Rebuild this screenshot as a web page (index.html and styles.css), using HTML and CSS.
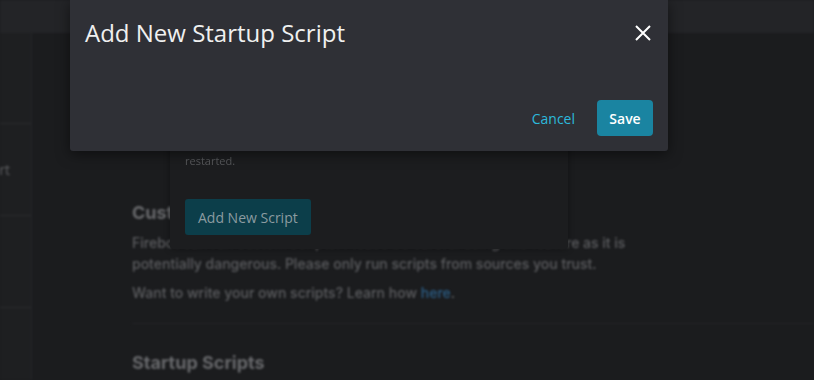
FILE: index.html
```html
<!DOCTYPE html>
<html>
<head>
<meta charset="utf-8">
<link rel="stylesheet" href="styles.css">
</head>
<body>
<div class="app">
  <header class="topbar"></header>
  <div class="workspace">
    <nav class="sidebar">
      <div class="nav-item"><span>Dashboard</span></div>
      <div class="nav-item"><span>Restart</span></div>
      <div class="nav-item"><span>Commands</span></div>
      <div class="nav-item"><span>Events</span></div>
    </nav>
    <main class="content">
      <h2 class="section-title">Custom Scripts</h2>
      <p class="text">Firebot can run custom scripts. Please be careful using this feature as it is<br>potentially dangerous. Please only run scripts from sources you trust.</p>
      <p class="text">Want to write your own scripts? Learn how <a class="link" href="#">here</a>.</p>
      <hr class="divider">
      <h2 class="section-title">Startup Scripts</h2>
    </main>
  </div>
</div>

<div class="popover">
  <p class="popover-text">Startup scripts run every time Firebot opens up, or when scripts are<br>restarted.</p>
  <button class="btn-dim">Add New Script</button>
</div>

<div class="modal">
  <div class="modal-header">
    <h1 class="modal-title">Add New Startup Script</h1>
    <button class="close" aria-label="Close">
      <svg width="16" height="16" viewBox="0 0 16 16"><path d="M1 1 L15 15 M15 1 L1 15" stroke="#ffffff" stroke-width="2" fill="none"/></svg>
    </button>
  </div>
  <div class="modal-footer">
    <button class="btn-link">Cancel</button>
    <button class="btn-primary">Save</button>
  </div>
</div>
</body>
</html>
```

FILE: styles.css
```css
html, body {
  margin: 0;
  padding: 0;
  height: 100%;
  overflow: hidden;
}
body {
  background: #1b1c1e;
  font-family: Inter, "Liberation Sans", sans-serif;
  position: relative;
}
.app {
  display: flex;
  flex-direction: column;
  height: 380px;
  overflow: hidden;
  filter: blur(0.9px);
}
.topbar {
  height: 33px;
  background: #232427;
  flex: none;
}
.workspace {
  display: flex;
  flex: 1;
  min-height: 0;
}
.sidebar {
  width: 31px;
  background: #1e1f21;
  border-right: 1px solid #242528;
  flex: none;
  display: flex;
  flex-direction: column;
  overflow: hidden;
}
.nav-item {
  flex: none;
  height: 91px;
  border-bottom: 1px solid #2a2b2e;
  display: flex;
  align-items: center;
  justify-content: flex-end;
  overflow: hidden;
  white-space: nowrap;
  padding-right: 21px;
  font-family: "Open Sans", sans-serif;
  font-size: 14px;
  color: #5e5f62;
}
.nav-item span { visibility: hidden; }
.nav-item:nth-child(2) span { visibility: visible; }
.nav-item:first-child { height: 90px; }
.content {
  flex: 1;
  padding: 167px 0 0 100px;
}
.section-title {
  margin: 0;
  font-size: 18px;
  line-height: 26px;
  font-weight: 700;
  color: #67686b;
}
.text {
  margin: 6px 0 0;
  font-size: 14px;
  line-height: 21px;
  font-weight: 500;
  color: #5c5d60;
  white-space: nowrap;
}
.text + .text { margin-top: 8px; }
.link { color: #2b5d85; text-decoration: none; }
.divider {
  border: none;
  border-top: 1px solid #232427;
  margin: 20px 0 26px;
}

.popover {
  position: absolute;
  left: 170px;
  top: 60px;
  width: 398px;
  height: 189px;
  box-sizing: border-box;
  background: #1c1d1f;
  box-shadow: 0 0 6px rgba(0,0,0,0.35);
  border-radius: 3px;
  padding: 0 15px 14px;
  display: flex;
  flex-direction: column;
  justify-content: flex-end;
  align-items: flex-start;
  font-family: "Open Sans", sans-serif;
}
.popover-text {
  margin: 0 0 29px;
  font-size: 11px;
  line-height: 18px;
  color: #57585b;
  white-space: nowrap;
  filter: blur(0.4px);
}
.btn-dim {
  height: 36px;
  padding: 0 13px;
  border: none;
  border-radius: 3px;
  background: #0c3e4a;
  color: #8b9ba0;
  font-family: "Open Sans", sans-serif;
  font-size: 14px;
}

.modal {
  position: absolute;
  left: 70px;
  top: 0;
  width: 598px;
  height: 151px;
  background: #2f3036;
  border-radius: 0 0 3px 3px;
  box-shadow: 0 3px 14px rgba(0,0,0,0.5);
  display: flex;
  flex-direction: column;
  font-family: "Open Sans", sans-serif;
  box-sizing: border-box;
  padding: 15px 15px 15px;
}
.modal-header {
  display: flex;
  align-items: center;
  justify-content: space-between;
}
.modal-title {
  margin: 0;
  font-size: 24px;
  line-height: 36px;
  font-weight: 400;
  color: #f0f0f0;
}
.close {
  background: none;
  border: none;
  padding: 0;
  margin-right: 2px;
  width: 16px;
  height: 16px;
  display: flex;
}
.modal-footer {
  margin-top: auto;
  display: flex;
  justify-content: flex-end;
  align-items: center;
  gap: 22px;
}
.btn-link {
  background: none;
  border: none;
  padding: 0;
  font-family: "Open Sans", sans-serif;
  font-size: 14px;
  color: #2cb9dc;
}
.btn-primary {
  height: 36px;
  width: 56px;
  padding: 0;
  border: none;
  border-radius: 4px;
  background: #1a84a1;
  color: #ffffff;
  font-family: "Open Sans", sans-serif;
  font-size: 14px;
  font-weight: 600;
}
```
